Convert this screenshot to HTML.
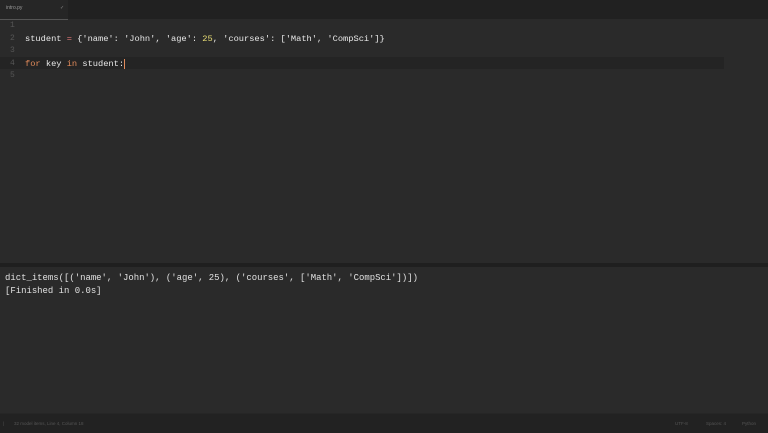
<!DOCTYPE html>
<html><head><style>
body{margin:0;width:768px;height:432px;background:#2a2a2a;overflow:hidden;position:relative;font-family:"Liberation Mono",monospace}
.tabbar{position:absolute;left:0;top:0;width:768px;height:19px;background:#212121}
.tab{position:absolute;left:0;top:0;width:68px;height:19px;background:#262626;border-bottom:1px solid #555}
.tab span{position:absolute;left:6px;top:5px;font:5px "Liberation Sans",sans-serif;color:#999}
.tab i{position:absolute;left:60px;top:5px;font:5px sans-serif;color:#888;font-style:normal}
.cur{position:absolute;left:0;top:57px;width:724px;height:12px;background:#242424}
.ln{position:absolute;left:10px;font-size:8px;color:#555;line-height:12.5px}
.code{position:absolute;left:25px;font-size:8.7px;color:#e8e8e8;white-space:pre;line-height:12.5px}
.k{color:#e08a5a}.n{color:#e6db74}.o{color:#d77}
.sep{position:absolute;left:0;top:263px;width:768px;height:4px;background:#1f1f1f}
.out{position:absolute;left:5px;top:272px;font-size:8.95px;color:#e0e0e0;white-space:pre;line-height:12.5px}
.status{position:absolute;left:0;top:413px;width:768px;height:19px;background:#222;border-top:1px solid #262626}
.status span{position:absolute;top:7px;font:4.5px "Liberation Sans",sans-serif;color:#555}
</style></head><body>
<div class="tabbar"><div class="tab"><span>intro.py</span><i>✓</i></div></div>
<div class="cur"></div>
<div class="ln" style="top:20px">1<br>2<br>3<br>4<br>5</div>
<div class="code" style="top:20px">
student <span class="o">=</span> {'name': 'John', 'age': <span class="n">25</span>, 'courses': ['Math', 'CompSci']}

<span class="k">for</span> key <span class="k">in</span> student:<span style="border-left:1px solid #e08a5a"></span>
</div>
<div class="sep"></div>
<div class="out">dict_items([('name', 'John'), ('age', 25), ('courses', ['Math', 'CompSci'])])
[Finished in 0.0s]</div>
<div class="status"><span style="left:3px">|</span><span style="left:14px">32 model items, Line 4, Column 18</span><span style="left:675px">UTF-8</span><span style="left:706px">Spaces: 4</span><span style="left:742px">Python</span></div>
</body></html>
